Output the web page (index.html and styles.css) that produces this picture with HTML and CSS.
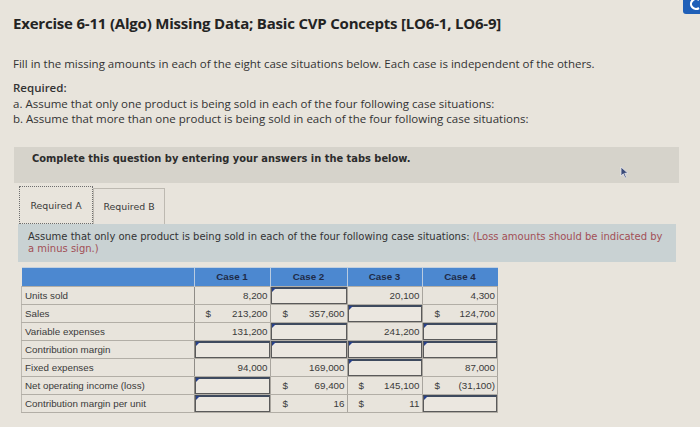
FILE: index.html
```html
<!DOCTYPE html>
<html>
<head>
<meta charset="utf-8">
<link rel="stylesheet" href="styles.css">
</head>
<body>
<div class="corner-btn"><svg width="14" height="12" viewBox="0 0 14 12"><path d="M11 1 A5 5 0 1 0 11 9" fill="none" stroke="#ffffff" stroke-width="2.2"/></svg></div>
<div class="page">
  <h1 class="title">Exercise 6-11 (Algo) Missing Data; Basic CVP Concepts [LO6-1, LO6-9]</h1>
  <p class="intro">Fill in the missing amounts in each of the eight case situations below. Each case is independent of the others.</p>
  <div class="required">
    <div class="req-head">Required:</div>
    <div class="req-line">a. Assume that only one product is being sold in each of the four following case situations:</div>
    <div class="req-line">b. Assume that more than one product is being sold in each of the four following case situations:</div>
  </div>
  <div class="complete-bar">
    <span class="complete-text">Complete this question by entering your answers in the tabs below.</span>
    <svg class="cursor" width="9" height="13" viewBox="0 0 9 13"><path d="M1 1 L1 10 L3.3 7.8 L5 12 L6.4 11.4 L4.7 7.3 L8 7.3 Z" fill="#3a4a78" stroke="#e8e8f0" stroke-width="0.8"/></svg>
  </div>
  <div class="tabs">
    <div class="tab tab-active">Required A</div>
    <div class="tab">Required B</div>
  </div>
  <div class="info">Assume that only one product is being sold in each of the four following case situations: <span class="note">(Loss amounts should be indicated by a minus sign.)</span></div>
  <table class="cvp">
    <thead>
      <tr>
        <th class="lbl"></th>
        <th colspan="2" class="c1">Case 1</th>
        <th colspan="2" class="c2">Case 2</th>
        <th colspan="2" class="c3">Case 3</th>
        <th colspan="2" class="c4">Case 4</th>
      </tr>
    </thead>
    <tbody>
      <tr>
        <td class="lbl">Units sold</td>
        <td class="cur c1"></td><td class="val">8,200</td>
        <td colspan="2" class="inp"><div class="box"></div></td>
        <td class="cur c3"></td><td class="val">20,100</td>
        <td class="cur c4"></td><td class="val">4,300</td>
      </tr>
      <tr>
        <td class="lbl">Sales</td>
        <td class="cur c1">$</td><td class="val">213,200</td>
        <td class="cur c2">$</td><td class="val">357,600</td>
        <td colspan="2" class="inp"><div class="box"></div></td>
        <td class="cur c4">$</td><td class="val">124,700</td>
      </tr>
      <tr>
        <td class="lbl">Variable expenses</td>
        <td class="cur c1"></td><td class="val">131,200</td>
        <td colspan="2" class="inp"><div class="box"></div></td>
        <td class="cur c3"></td><td class="val">241,200</td>
        <td colspan="2" class="inp"><div class="box"></div></td>
      </tr>
      <tr>
        <td class="lbl">Contribution margin</td>
        <td colspan="2" class="inp"><div class="box"></div></td>
        <td colspan="2" class="inp"><div class="box"></div></td>
        <td colspan="2" class="inp"><div class="box"></div></td>
        <td colspan="2" class="inp"><div class="box"></div></td>
      </tr>
      <tr>
        <td class="lbl">Fixed expenses</td>
        <td class="cur c1"></td><td class="val">94,000</td>
        <td class="cur c2"></td><td class="val">169,000</td>
        <td colspan="2" class="inp"><div class="box"></div></td>
        <td class="cur c4"></td><td class="val">87,000</td>
      </tr>
      <tr>
        <td class="lbl">Net operating income (loss)</td>
        <td colspan="2" class="inp"><div class="box"></div></td>
        <td class="cur c2">$</td><td class="val">69,400</td>
        <td class="cur c3">$</td><td class="val">145,100</td>
        <td class="cur c4">$</td><td class="val">(31,100)</td>
      </tr>
      <tr>
        <td class="lbl">Contribution margin per unit</td>
        <td colspan="2" class="inp"><div class="box"></div></td>
        <td class="cur c2">$</td><td class="val">16</td>
        <td class="cur c3">$</td><td class="val">11</td>
        <td colspan="2" class="inp"><div class="box"></div></td>
      </tr>
    </tbody>
  </table>
</div>
</body>
</html>
```

FILE: styles.css
```css
html, body {
  margin: 0;
  padding: 0;
}
body {
  width: 700px;
  height: 427px;
  overflow: hidden;
  background: #e8e4dc;
  color: #2e2e2e;
  font-family: "Open Sans", "Liberation Sans", sans-serif;
  position: relative;
}
.corner-btn {
  position: absolute;
  top: -4px;
  right: -6px;
  width: 23px;
  height: 18px;
  background: #1f5fb8;
  border-radius: 3px;
  box-sizing: border-box;
  padding: 3px 0 0 5px;
  overflow: hidden;
}
.corner-btn svg {
  display: block;
}
.page {
  padding: 13px 0 0 13px;
}
.title {
  margin: 0;
  font-size: 15px;
  line-height: 20px;
  font-weight: 700;
  color: #232323;
  letter-spacing: -0.2px;
}
.intro {
  margin: 23px 0 0 0;
  font-size: 11.5px;
  line-height: 15px;
  color: #333;
}
.required {
  margin-top: 9px;
  font-size: 11.5px;
  line-height: 15.5px;
  color: #333;
}
.req-head {
  font-weight: 600;
}
.complete-bar {
  margin: 20px 0 0 1px;
  width: 665px;
  height: 36px;
  background: #d6d3cb;
  box-sizing: border-box;
  padding: 5px 0 0 18px;
  display: flex;
  align-items: flex-start;
}
.complete-text {
  font-family: "DejaVu Sans", Verdana, sans-serif;
  font-weight: 700;
  font-size: 9.9px;
  line-height: 14px;
  color: #2c2c2c;
}
.cursor {
  margin: 14px 0 0 209px;
}
.tabs {
  margin: 3px 0 0 6px;
  display: flex;
  align-items: flex-start;
}
.tab {
  font-family: "DejaVu Sans", Verdana, sans-serif;
  font-size: 9.4px;
  color: #3a3a3a;
  height: 36px;
  box-sizing: border-box;
  padding: 12px 0 0 0;
  text-align: center;
  border: 1px solid #bdb9b1;
  border-bottom: none;
  background: #e7e3dc;
}
.tab-active {
  width: 74px;
  height: 38px;
  border: 1px dotted #6e6e6e;
  background: #e8e4dc;
  padding-top: 13px;
}
.tab:not(.tab-active) {
  width: 72px;
  margin-top: 2px;
}
.info {
  margin: 0 0 0 5px;
  width: 658px;
  height: 38px;
  box-sizing: border-box;
  background: #c9d2d3;
  padding: 7px 8px 0 10px;
  font-family: "DejaVu Sans", Verdana, sans-serif;
  font-size: 10px;
  line-height: 12px;
  color: #333;
}
.note {
  color: #a24f56;
}
.cvp {
  margin: 5px 0 0 8px;
  border-collapse: collapse;
  font-family: "Liberation Sans", Arial, sans-serif;
  font-size: 9.8px;
  color: #3a3a3a;
  table-layout: fixed;
}
.cvp th {
  background: #4c88d0;
  height: 18px;
  padding: 0;
  font-weight: 700;
  color: #1e2b48;
  text-align: center;
  border-left: 1px solid #b9cbe0;
  border-top: 1px solid #c2d0df;
}
.cvp th.lbl {
  width: 172px;
  border-left: none;
}
.cvp td {
  height: 17px;
  padding: 0;
  border-top: 1px solid #b2aea6;
  border-bottom: 1px solid #b2aea6;
  white-space: nowrap;
}
.cvp td.lbl {
  padding-left: 3px;
  border-left: 1px solid #bcb8b0;
  border-right: 1px solid #8f8c87;
}
.cvp td.cur {
  padding-left: 11px;
  width: 10px;
  border-left: 1px solid #a9a59e;
}
.cvp td.c2, .cvp td.c4 {
  padding-left: 12px;
}
.cvp td.val {
  text-align: right;
  padding-right: 2px;
  border-right: 1px solid #a9a59e;
}
.cvp td.inp {
  padding: 0;
  border-left: 1px solid #a9a59e;
  border-right: 1px solid #a9a59e;
}
.cvp th.c1 { width: 75px; }
.cvp th.c2 { width: 76px; }
.cvp th.c3 { width: 74px; }
.cvp th.c4 { width: 75px; }
.box {
  position: relative;
  height: 17px;
  box-sizing: border-box;
  border: 1px solid #5a5a5a;
  border-top: 2px solid #3e4a5e;
  background: #ebe7e0;
}
.box::before {
  content: "";
  position: absolute;
  top: -1px;
  left: 0;
  border-top: 4px solid #27408a;
  border-right: 4px solid transparent;
}
```
